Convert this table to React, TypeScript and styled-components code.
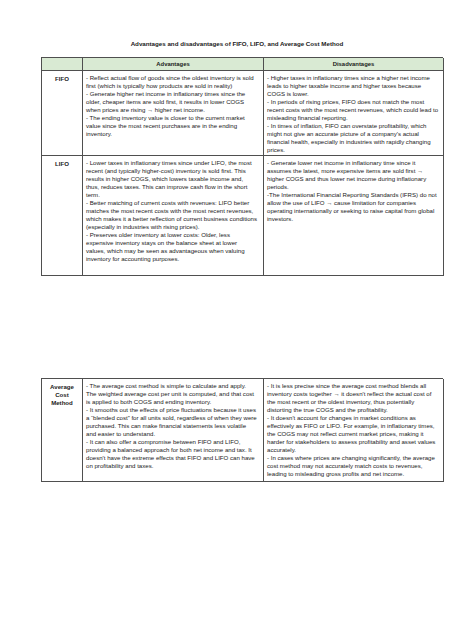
import React from 'react'
import styled, {createGlobalStyle} from 'styled-components'

type Row = {
  label: string[]
  height: number
  pros: string[]
  cons: string[]
}

const topRows: Row[] = [
  {
    label: ['FIFO'],
    height: 85,
    pros: [
      '- Reflect actual flow of goods since the oldest inventory is sold',
      'first (which is typically how products are sold in reality)',
      '- Generate higher net income in inflationary times since the',
      'older, cheaper items are sold first, it results in lower COGS',
      'when prices are rising \u2192 higher net income.',
      '- The ending inventory value is closer to the current market',
      'value since the most recent purchases are in the ending',
      'inventory.',
    ],
    cons: [
      '- Higher taxes in inflationary times since a higher net income',
      'leads to higher taxable income and higher taxes because',
      'COGS is lower.',
      '- In periods of rising prices, FIFO does not match the most',
      'recent costs with the most recent revenues, which could lead to',
      'misleading financial reporting.',
      '- In times of inflation, FIFO can overstate profitability, which',
      "might not give an accurate picture of a company's actual",
      'financial health, especially in industries with rapidly changing',
      'prices.',
    ],
  },
  {
    label: ['LIFO'],
    height: 120,
    pros: [
      '- Lower taxes in inflationary times since under LIFO, the most',
      'recent (and typically higher-cost) inventory is sold first. This',
      'results in higher COGS, which lowers taxable income and,',
      'thus, reduces taxes. This can improve cash flow in the short',
      'term.',
      '- Better matching of current costs with revenues: LIFO better',
      'matches the most recent costs with the most recent revenues,',
      'which makes it a better reflection of current business conditions',
      '(especially in industries with rising prices).',
      '- Preserves older inventory at lower costs: Older, less',
      'expensive inventory stays on the balance sheet at lower',
      'values, which may be seen as advantageous when valuing',
      'inventory for accounting purposes.',
    ],
    cons: [
      '- Generate lower net income in inflationary time since it',
      'assumes the latest, more expensive items are sold first \u2192',
      'higher COGS and thus lower net income during inflationary',
      'periods.',
      '-The International Financial Reporting Standards (IFRS) do not',
      'allow the use of LIFO \u2192 cause limitation for companies',
      'operating internationally or seeking to raise capital from global',
      'investors.',
    ],
  },
]

const bottomRows: Row[] = [
  {
    label: ['Average', 'Cost', 'Method'],
    height: 103,
    pros: [
      '- The average cost method is simple to calculate and apply.',
      'The weighted average cost per unit is computed, and that cost',
      'is applied to both COGS and ending inventory.',
      '- It smooths out the effects of price fluctuations because it uses',
      'a \u201cblended cost\u201d for all units sold, regardless of when they were',
      'purchased. This can make financial statements less volatile',
      'and easier to understand.',
      '- It can also offer a compromise between FIFO and LIFO,',
      'providing a balanced approach for both net income and tax. It',
      "doesn't have the extreme effects that FIFO and LIFO can have",
      'on profitability and taxes.',
    ],
    cons: [
      '- It is less precise since the average cost method blends all',
      "inventory costs together \u2192 it doesn't reflect the actual cost of",
      'the most recent or the oldest inventory, thus potentially',
      'distorting the true COGS and the profitability.',
      "- It doesn't account for changes in market conditions as",
      'effectively as FIFO or LIFO. For example, in inflationary times,',
      'the COGS may not reflect current market prices, making it',
      'harder for stakeholders to assess profitability and asset values',
      'accurately.',
      '- In cases where prices are changing significantly, the average',
      'cost method may not accurately match costs to revenues,',
      'leading to misleading gross profits and net income.',
    ],
  },
]

const Lines: React.FC<{lines: string[]}> = ({lines}) => (
  <>
    {lines.map((l, i) => (
      <Line key={i}>{l}</Line>
    ))}
  </>
)

const TableRows: React.FC<{rows: Row[]}> = ({rows}) => (
  <>
    {rows.map((r, i) => (
      <React.Fragment key={i}>
        <LabelCell $h={r.height}>
          <Lines lines={r.label} />
        </LabelCell>
        <Cell $h={r.height}>
          <Lines lines={r.pros} />
        </Cell>
        <Cell $h={r.height}>
          <Lines lines={r.cons} />
        </Cell>
      </React.Fragment>
    ))}
  </>
)

const App: React.FC = () => {
  return (
    <Page>
      <GlobalStyle />
      <Title>Advantages and disadvantages of FIFO, LIFO, and Average Cost Method</Title>
      <Table>
        <HeadCell />
        <HeadCell>Advantages</HeadCell>
        <HeadCell>Disadvantages</HeadCell>
        <TableRows rows={topRows} />
      </Table>
      <Table $gap={102}>
        <TableRows rows={bottomRows} />
      </Table>
    </Page>
  )
}
export default App

const GlobalStyle = createGlobalStyle`
  html, body {
    margin: 0;
    padding: 0;
    background: #ffffff;
  }
`

const Page = styled.div`
  width: 474px;
  height: 632px;
  box-sizing: border-box;
  padding-top: 40px;
  background: #ffffff;
  font-family: 'Liberation Sans', Arial, sans-serif;
  color: #1a1a1a;
`

const Title = styled.div`
  height: 8px;
  line-height: 8px;
  text-align: center;
  font-size: 6.2px;
  font-weight: bold;
  white-space: nowrap;
`

const Table = styled.div<{$gap?: number}>`
  display: grid;
  grid-template-columns: 41px 181px 180px;
  width: 402px;
  margin: ${p => p.$gap ?? 9}px 0 0 41px;
  border-top: 1px solid #4f4f4f;
  border-left: 1px solid #4f4f4f;
  box-sizing: border-box;
`

const HeadCell = styled.div`
  height: 13px;
  box-sizing: border-box;
  background: #d9ead3;
  border-right: 1px solid #4f4f4f;
  border-bottom: 1px solid #4f4f4f;
  display: flex;
  align-items: center;
  justify-content: center;
  font-size: 5.9px;
  font-weight: bold;
`

const Cell = styled.div<{$h: number}>`
  height: ${p => p.$h}px;
  box-sizing: border-box;
  padding: 3px 1px 0 3px;
  border-right: 1px solid #4f4f4f;
  border-bottom: 1px solid #4f4f4f;
  font-size: 6.1px;
  overflow: hidden;
`

const LabelCell = styled(Cell)`
  text-align: center;
  font-weight: bold;
  padding: 4px 0 0 0;
`

const Line = styled.div`
  height: 8px;
  line-height: 8px;
  white-space: nowrap;
`
